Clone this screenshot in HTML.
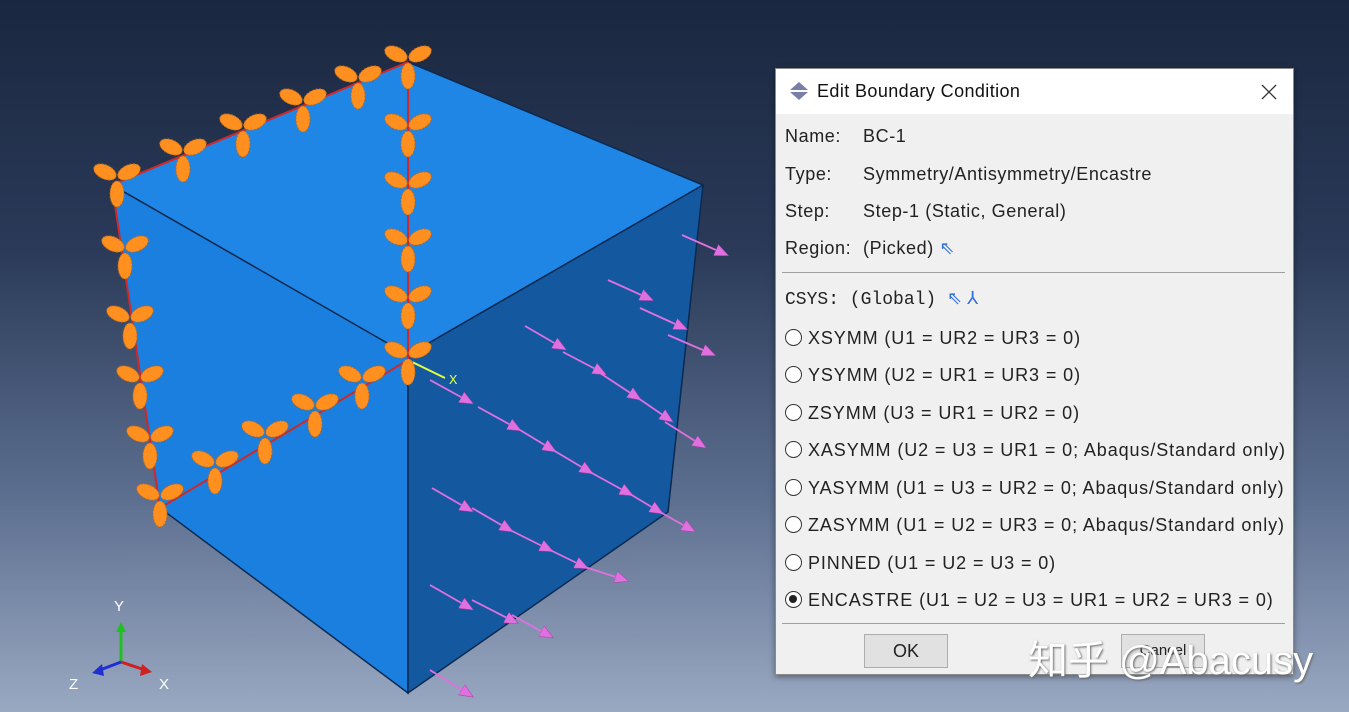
<!DOCTYPE html>
<html><head><meta charset="utf-8"><style>
*{margin:0;padding:0;box-sizing:border-box}
body{width:1349px;height:712px;overflow:hidden;position:relative;background:linear-gradient(to bottom,#1a2740 0%,#2a3a58 35%,#5d6f90 70%,#9aa9c2 100%);font-family:"Liberation Sans","Noto Sans CJK SC",sans-serif}
svg.scene{position:absolute;left:0;top:0}
.dlg{position:absolute;left:775px;top:68px;width:519px;height:607px;background:#f0f0f0;border:1px solid #8a8a8a;box-shadow:0 2px 6px rgba(0,0,0,.4)}
.tb{height:45px;background:#fff;position:relative;font-size:18px;color:#111}
.tb .t{position:absolute;left:41px;top:12px;letter-spacing:.4px}
.r{position:absolute;left:9px;font-size:18px;color:#222;white-space:nowrap;letter-spacing:.6px}
.r b{font-weight:normal;position:absolute;left:78px}
.sep{position:absolute;left:6px;right:8px;height:1px;background:#a0a0a0}
.rad{position:absolute;left:9px;font-size:18px;color:#222;white-space:nowrap;letter-spacing:.9px}
.rad i{display:inline-block;width:17px;height:17px;border:1.5px solid #333;border-radius:50%;vertical-align:-2px;margin-right:6px;position:relative;background:#fff}
.rad i.on:after{content:"";position:absolute;left:3px;top:3px;width:8px;height:8px;border-radius:50%;background:#222}
.ok{position:absolute;left:88px;top:565px;width:84px;height:34px;border:1px solid #adadad;background:#e1e1e1;font-size:18px;text-align:center;line-height:32px;color:#222}
.cn{position:absolute;left:345px;top:565px;width:84px;height:34px;border:1px solid #adadad;background:#e1e1e1;font-size:15px;text-align:center;line-height:32px;color:#222}
.wm{position:absolute;left:1028px;top:628px;font-size:40px;color:#fff;text-shadow:1px 1px 2px #666;white-space:nowrap}
</style></head><body>
<svg class="scene" width="1349" height="712" viewBox="0 0 1349 712">
<defs>
<g id="m" fill="#ff9020" stroke="#b86a20" stroke-width="1" stroke-dasharray="2 1.5">
<ellipse cx="-12" cy="-8" rx="12" ry="7" transform="rotate(25 -12 -8)"/>
<ellipse cx="12" cy="-8" rx="12" ry="7" transform="rotate(-25 12 -8)"/>
<ellipse cx="0" cy="14" rx="7" ry="13"/>
</g>
<marker id="ah" markerWidth="14" markerHeight="12" refX="10" refY="6" orient="auto" markerUnits="userSpaceOnUse"><path d="M0,0 L14,6 L0,12 Z" fill="#e070e0" stroke="#a040a0" stroke-width=".5"/></marker>
</defs>
<polygon points="112,185 408,62 703,185 408,355" fill="#1f86e6" stroke="#0a2a50" stroke-width="1.5"/>
<polygon points="112,185 408,355 408,693 160,508" fill="#1a7fdf" stroke="#0a2a50" stroke-width="1.5"/>
<polygon points="408,355 703,185 668,512 408,693" fill="#14589f" stroke="#0a2a50" stroke-width="1.5"/>
<g stroke="#d02828" stroke-width="2">
<line x1="112" y1="185" x2="408" y2="62"/><line x1="408" y1="62" x2="408" y2="360"/>
<line x1="112" y1="185" x2="160" y2="508"/><line x1="408" y1="360" x2="160" y2="508"/>
</g>
<line x1="408" y1="360" x2="445" y2="378" stroke="#e0ff40" stroke-width="2"/>
<text x="449" y="384" fill="#e0ff40" font-size="14" font-family="Liberation Mono">X</text>
<g stroke="#e070e0" stroke-width="1.8" marker-end="url(#ah)">
<line x1="682" y1="235" x2="725" y2="254"/><line x1="608" y1="280" x2="650" y2="299"/>
<line x1="640" y1="308" x2="684" y2="328"/><line x1="668" y1="335" x2="712" y2="354"/>
<line x1="430" y1="380" x2="470" y2="402"/><line x1="478" y1="407" x2="518" y2="429"/>
<line x1="520" y1="430" x2="553" y2="450"/><line x1="553" y1="450" x2="590" y2="472"/>
<line x1="590" y1="472" x2="630" y2="494"/><line x1="630" y1="494" x2="660" y2="512"/>
<line x1="660" y1="512" x2="692" y2="530"/>
<line x1="525" y1="326" x2="563" y2="348"/><line x1="563" y1="352" x2="603" y2="373"/>
<line x1="600" y1="373" x2="638" y2="398"/><line x1="638" y1="398" x2="670" y2="420"/>
<line x1="665" y1="422" x2="703" y2="446"/>
<line x1="432" y1="488" x2="470" y2="510"/><line x1="472" y1="508" x2="510" y2="530"/>
<line x1="510" y1="530" x2="550" y2="550"/><line x1="550" y1="550" x2="585" y2="567"/>
<line x1="585" y1="567" x2="625" y2="580"/>
<line x1="430" y1="585" x2="470" y2="608"/><line x1="472" y1="600" x2="515" y2="622"/>
<line x1="512" y1="615" x2="550" y2="636"/><line x1="430" y1="670" x2="470" y2="695"/>
</g>
<g>
<use href="#m" x="117" y="180"/><use href="#m" x="183" y="155"/><use href="#m" x="243" y="130"/>
<use href="#m" x="303" y="105"/><use href="#m" x="358" y="82"/><use href="#m" x="408" y="62"/>
<use href="#m" x="408" y="130"/><use href="#m" x="408" y="188"/><use href="#m" x="408" y="245"/>
<use href="#m" x="408" y="302"/><use href="#m" x="408" y="358"/>
<use href="#m" x="125" y="252"/><use href="#m" x="130" y="322"/><use href="#m" x="140" y="382"/>
<use href="#m" x="150" y="442"/><use href="#m" x="160" y="500"/>
<use href="#m" x="362" y="382"/><use href="#m" x="315" y="410"/><use href="#m" x="265" y="437"/><use href="#m" x="215" y="467"/>
</g>
<g stroke-width="3">
<line x1="121" y1="662" x2="121" y2="630" stroke="#20c020"/><path d="M116,632 L121,622 L126,632Z" fill="#20c020"/>
<line x1="121" y1="662" x2="145" y2="670" stroke="#d02020"/><path d="M142,664 L152,672 L140,676Z" fill="#d02020"/>
<line x1="121" y1="662" x2="100" y2="670" stroke="#2030d0"/><path d="M102,664 L92,673 L104,676Z" fill="#2030d0"/>
</g>
<text x="114" y="611" fill="#fff" font-size="15">Y</text>
<text x="69" y="689" fill="#fff" font-size="15">Z</text>
<text x="159" y="689" fill="#fff" font-size="15">X</text>
</svg>
<div class="dlg">
<div class="tb"><svg style="position:absolute;left:12px;top:12px" width="22" height="20" viewBox="0 0 22 20"><path d="M11,1 L20,9 L2,9Z" fill="#7a7fa8"/><path d="M11,19 L20,11 L2,11Z" fill="#7a7fa8"/></svg><span class="t">Edit Boundary Condition</span>
<svg style="position:absolute;right:16px;top:15px" width="16" height="16"><path d="M1,1 L15,15 M15,1 L1,15" stroke="#333" stroke-width="1.3"/></svg></div>
<div class="r" style="top:57px">Name:<b>BC-1</b></div>
<div class="r" style="top:95px">Type:<b>Symmetry/Antisymmetry/Encastre</b></div>
<div class="r" style="top:132px">Step:<b>Step-1 (Static, General)</b></div>
<div class="r" style="top:169px">Region:<b>(Picked) <span style="color:#3070e0">⇖</span></b></div>
<div class="sep" style="top:203px"></div>
<div class="r" style="top:219px;font-family:'Liberation Mono',monospace;font-size:18px;letter-spacing:0">CSYS: (Global) <span style="color:#3070e0;font-family:'Liberation Sans'">⇖ ⅄</span></div>
<div class="rad" style="top:259px"><i></i>XSYMM (U1 = UR2 = UR3 = 0)</div>
<div class="rad" style="top:296px"><i></i>YSYMM (U2 = UR1 = UR3 = 0)</div>
<div class="rad" style="top:334px"><i></i>ZSYMM (U3 = UR1 = UR2 = 0)</div>
<div class="rad" style="top:371px"><i></i>XASYMM (U2 = U3 = UR1 = 0; Abaqus/Standard only)</div>
<div class="rad" style="top:409px"><i></i>YASYMM (U1 = U3 = UR2 = 0; Abaqus/Standard only)</div>
<div class="rad" style="top:446px"><i></i>ZASYMM (U1 = U2 = UR3 = 0; Abaqus/Standard only)</div>
<div class="rad" style="top:484px"><i></i>PINNED (U1 = U2 = U3 = 0)</div>
<div class="rad" style="top:521px"><i class="on"></i>ENCASTRE (U1 = U2 = U3 = UR1 = UR2 = UR3 = 0)</div>
<div class="sep" style="top:554px"></div>
<div class="ok">OK</div>
<div class="cn">Cancel</div>
</div>
<div class="wm">知乎 @Abacusy</div>
</body></html>
